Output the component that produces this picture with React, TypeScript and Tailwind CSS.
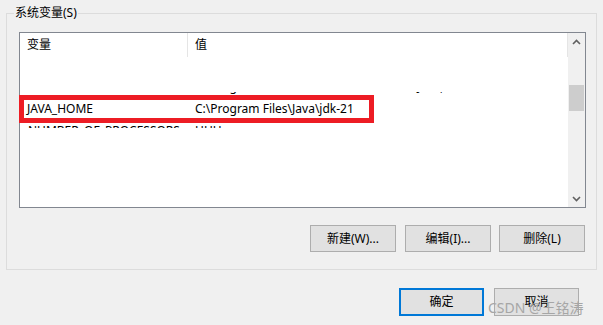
import React from 'react';

const FONT = '"Noto Sans", "Noto Sans CJK SC", sans-serif';

function Chevron({ up }: { up?: boolean }) {
  return (
    <svg width="9" height="6" viewBox="0 0 9 6" className="block">
      <path
        d={up ? 'M1 5 L4.5 1.5 L8 5' : 'M1 1 L4.5 4.5 L8 1'}
        fill="none"
        stroke="#606060"
        strokeWidth="1.6"
      />
    </svg>
  );
}

function WinButton({ label, primary }: { label: string; primary?: boolean }) {
  return (
    <button
      className={
        primary
          ? 'w-[85px] h-[28px] bg-[#e1e1e1] border-2 border-[#0078d7] text-[12px] text-black flex items-center justify-center'
          : 'w-[85px] h-[28px] bg-[#e1e1e1] border border-[#adadad] text-[12px] text-black flex items-center justify-center'
      }
    >
      {label}
    </button>
  );
}

export default function App() {
  return (
    <div
      className="relative w-[603px] h-[325px] bg-[#f0f0f0] overflow-hidden text-black"
      style={{ fontFamily: FONT }}
    >
      <div className="pt-[13px] pl-[6px]">
        {/* group box */}
        <div className="w-[591px] h-[257px] border border-[#dcdcdc] flex flex-col">
          <div className="-mt-[9px] ml-[7px] px-[1px] w-fit bg-[#f0f0f0] text-[12px] leading-[16px]">
            系统变量(S)
          </div>

          {/* list view */}
          <div className="mt-[11px] ml-[12px] w-[567px] h-[176px] border border-[#828790] bg-white flex">
            <div className="flex-1 flex flex-col">
              <div className="h-[24px] flex text-[12px] border-r border-[#e5e5e5]">
                <div className="w-[168px] pl-[7px] flex items-center border-r border-[#e5e5e5]">变量</div>
                <div className="flex-1 pl-[7px] flex items-center">值</div>
              </div>

              <div className="h-[35px]" />

              {/* clipped remnant of the row above */}
              <div className="h-[3px] overflow-hidden flex items-end text-[12px] leading-[17px]">
                <div className="w-[168px] shrink-0" />
                <div className="pl-[7px] whitespace-nowrap">C:\Program Files\Common Files\Oracle\Java;</div>
              </div>

              <div className="mt-[5px] h-[18px] flex items-center text-[12px]">
                <div className="w-[168px] pl-[7px] shrink-0">JAVA_HOME</div>
                <div className="pl-[7px] whitespace-nowrap">C:\Program Files\Java\jdk-21</div>
              </div>

              {/* clipped remnant of the row below */}
              <div className="mt-[5px] h-[5px] overflow-hidden flex items-start text-[12px] leading-[15px]">
                <div className="w-[168px] pl-[8px] shrink-0 whitespace-nowrap">NUMBER_OF_PROCESSORS</div>
                <div className="pl-[7px] whitespace-nowrap">HHH</div>
              </div>
            </div>

            {/* scrollbar */}
            <div className="w-[17px] bg-[#f0f0f0] flex flex-col items-center">
              <div className="h-[17px] flex items-center justify-center">
                <Chevron up />
              </div>
              <div className="mt-[35px] w-[15px] h-[26px] bg-[#cdcdcd]" />
              <div className="flex-1" />
              <div className="h-[17px] flex items-center justify-center">
                <Chevron />
              </div>
            </div>
          </div>

          {/* group buttons */}
          <div className="mt-[17px] mr-[11px] flex justify-end">
            <button className="w-[86px] h-[27px] bg-[#e1e1e1] border border-[#adadad] text-[12px]">新建(W)...</button>
            <button className="ml-[9px] w-[86px] h-[27px] bg-[#e1e1e1] border border-[#adadad] text-[12px]">编辑(I)...</button>
            <button className="ml-[8px] w-[86px] h-[27px] bg-[#e1e1e1] border border-[#adadad] text-[12px]">删除(L)</button>
          </div>
        </div>
      </div>

      {/* dialog buttons */}
      <div className="mt-[18px] mr-[24px] flex justify-end gap-[10px]">
        <WinButton label="确定" primary />
        <WinButton label="取消" />
      </div>

      {/* red highlight annotation */}
      <div className="absolute left-[19px] top-[95px] w-[355px] h-[28px] border-[5px] border-[#ed1c24]" />

      {/* watermark */}
      <div className="absolute left-[488px] top-[299px] text-[14px] leading-[18px] text-[#a6a6a6] whitespace-nowrap">
        CSDN @王铭涛
      </div>
    </div>
  );
}
